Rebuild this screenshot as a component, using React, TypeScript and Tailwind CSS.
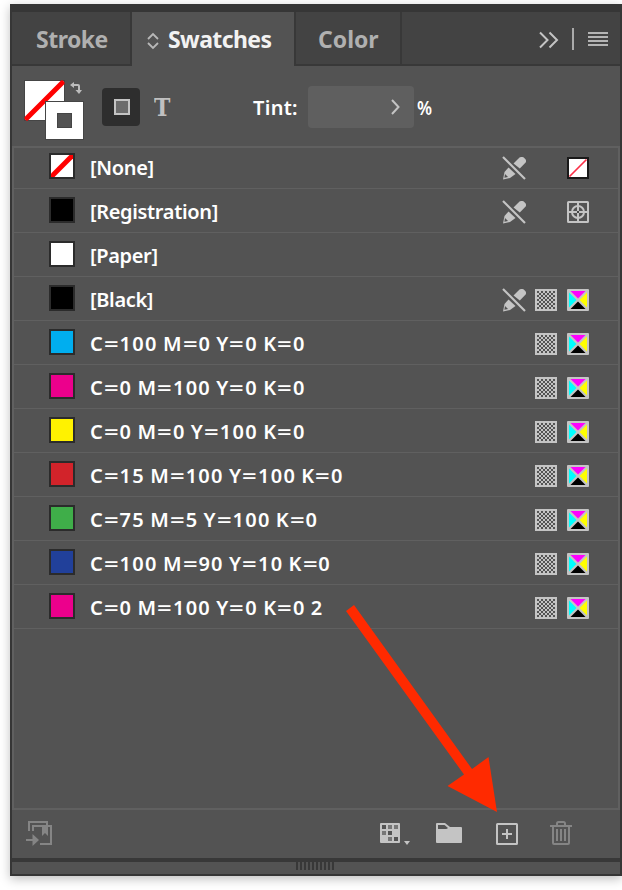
import React from "react";

type Swatch = {
  name: string;
  fill: string;
  locked?: boolean;
  kind?: "none" | "registration" | "process";
};

const swatches: Swatch[] = [
  { name: "[None]", fill: "none", locked: true, kind: "none" },
  { name: "[Registration]", fill: "#000000", locked: true, kind: "registration" },
  { name: "[Paper]", fill: "#ffffff" },
  { name: "[Black]", fill: "#000000", locked: true, kind: "process" },
  { name: "C=100 M=0 Y=0 K=0", fill: "#00aeef", kind: "process" },
  { name: "C=0 M=100 Y=0 K=0", fill: "#ec008c", kind: "process" },
  { name: "C=0 M=0 Y=100 K=0", fill: "#fff200", kind: "process" },
  { name: "C=15 M=100 Y=100 K=0", fill: "#d2232a", kind: "process" },
  { name: "C=75 M=5 Y=100 K=0", fill: "#3fae49", kind: "process" },
  { name: "C=100 M=90 Y=10 K=0", fill: "#21409a", kind: "process" },
  { name: "C=0 M=100 Y=0 K=0 2", fill: "#ec008c", kind: "process" },
];

function LockedIcon() {
  return (
    <svg width="24" height="24" viewBox="0 0 24 24" className="block">
      <g fill="#c4c4c4">
        <path d="M11.5 7.5 L17.5 1.6 Q18.2 1 19 1 H20.5 Q21.2 1 21.8 1.6 L23.4 3.2 Q24 3.8 24 4.5 V5.5 Q24 6.2 23.4 6.8 L17.8 12.5 Z" />
        <path d="M6.5 11.5 L13.5 18 L8 22 L1 23.5 L2.5 16 Z" />
      </g>
      <path d="M3 18 L6 21 L2.4 21.8 Z" fill="#535353" />
      <path d="M3 1.8 L23 21.8" stroke="#535353" strokeWidth="3" />
      <path d="M1 1 L23 23" stroke="#c4c4c4" strokeWidth="2.2" />
    </svg>
  );
}

function CheckerIcon() {
  const cells: React.ReactElement[] = [];
  for (let y = 0; y < 9; y++)
    for (let x = 0; x < 9; x++)
      if ((x + y) % 2 === 0)
        cells.push(<rect key={`${x}-${y}`} x={2 + x * 2} y={2 + y * 2} width="2" height="2" />);
  return (
    <svg width="22" height="22" className="block" shapeRendering="crispEdges">
      <rect width="22" height="22" rx="1" fill="#c4c4c4" />
      <g fill="#535353">{cells}</g>
    </svg>
  );
}

function ProcessIcon() {
  return (
    <svg width="22" height="22" className="block">
      <rect width="22" height="22" rx="1" fill="#c4c4c4" />
      <path d="M3.5 2 H18.5 L11 9.5 Z" fill="#ff00ff" />
      <path d="M20 3.5 V18.5 L12.5 11 Z" fill="#ffff00" />
      <path d="M2 3.5 V18.5 L9.5 11 Z" fill="#00ffff" />
      <path d="M3.5 20 H18.5 L11 12.5 Z" fill="#000" />
    </svg>
  );
}

function KindIcon({ kind }: { kind?: Swatch["kind"] }) {
  if (kind === "none")
    return (
      <svg width="22" height="22" className="block">
        <rect x="1" y="1" width="20" height="20" fill="#fff" stroke="#1a1a1a" strokeWidth="2" />
        <path d="M2.5 19.5 L19.5 2.5" stroke="#fb3048" strokeWidth="1.7" />
      </svg>
    );
  if (kind === "registration")
    return (
      <svg width="22" height="22" className="block" fill="none" stroke="#c4c4c4">
        <rect x="1" y="1" width="20" height="20" rx=".5" strokeWidth="2" />
        <circle cx="11" cy="11" r="6" strokeWidth="2" />
        <path d="M11 2 V20 M2 11 H20" strokeWidth="2" />
        <rect x="10" y="10" width="2" height="2" fill="#444" stroke="none" />
      </svg>
    );
  if (kind === "process") return <ProcessIcon />;
  return null;
}

/* Gives the equals signs and digits of a process colour name their wide set. */
function SwatchName({ name }: { name: string }) {
  if (!name.includes("=")) return <span className="tracking-[-0.35px]">{name}</span>;
  return (
    <>
      {name.split(/(=|\d+)/).map((part, i) => {
        if (part === "=")
          return (
            <span key={i} className="inline-block w-[16.8px] scale-x-[1.28] text-center">
              =
            </span>
          );
        if (/^\d+$/.test(part))
          return (
            <span key={i} className="tracking-[1.3px]">
              {part}
            </span>
          );
        return <span key={i}>{part}</span>;
      })}
    </>
  );
}

function SwatchRow({ swatch, first }: { swatch: Swatch; first: boolean }) {
  return (
    <div className={`flex items-end border-b border-[#606060] ${first ? "h-[41px]" : "h-11"}`}>
      <div className="flex h-10 w-full items-center">
        <div className="mb-1 ml-[35px] size-[26px] shrink-0 border-2 border-[#2b2b2b]">
          {swatch.fill === "none" ? (
            <svg width="22" height="22" className="block bg-white">
              <path d="M-1 23 L23 -1" stroke="#ff0000" strokeWidth="5" />
            </svg>
          ) : (
            <div className="size-full" style={{ backgroundColor: swatch.fill }} />
          )}
        </div>
        <span className="ml-[15px] flex-1 text-[20px] leading-none font-semibold whitespace-pre text-white">
          <SwatchName name={swatch.name} />
        </span>
        <div className="mr-[29px] flex items-center">
          {swatch.locked && (
            <div className={swatch.kind === "process" ? "mr-[9px]" : "mr-[41px]"}>
              <LockedIcon />
            </div>
          )}
          {swatch.kind === "process" && (
            <div className="mr-[10px]">
              <CheckerIcon />
            </div>
          )}
          <KindIcon kind={swatch.kind} />
        </div>
      </div>
    </div>
  );
}

function TabBar() {
  return (
    <div className="flex h-[54px] shrink-0 text-[23px] leading-none font-bold text-[#b0b0b0]">
      <div className="flex w-[120px] items-center border-r-2 border-b-2 border-[#383838] bg-[#434343] pt-[3px] pl-6 tracking-[-0.5px]">
        <span>Stroke</span>
      </div>
      <div className="flex w-[162px] items-center border-b-2 border-[#535353] bg-[#535353] pt-[3px] pl-[15px] tracking-[-0.6px] text-[#f2f2f2]">
        <svg width="12" height="18" className="mt-0.5 mr-[9px] block" fill="none" stroke="#b8b8b8" strokeWidth="1.8">
          <path d="M1 7 L6 2 L11 7 M1 11 L6 16 L11 11" />
        </svg>
        <span>Swatches</span>
      </div>
      <div className="flex w-[108px] items-center border-x-2 border-b-2 border-[#383838] bg-[#434343] pt-[3px] pl-[22px]">
        <span>Color</span>
      </div>
      <div className="flex flex-1 items-center justify-end border-b-2 border-[#383838] bg-[#434343] pt-0.5 pr-3">
        <svg width="20" height="18" className="mt-0.5 block" fill="none" stroke="#c4c4c4" strokeWidth="2">
          <path d="M1 1.5 L8.5 9 L1 16.5 M10.5 1.5 L18 9 L10.5 16.5" />
        </svg>
        <div className="ml-[13px] h-[22px] w-0.5 bg-[#aaaaaa]" />
        <div className="ml-[14px] flex w-5 flex-col gap-0.5">
          <div className="h-0.5 bg-[#b4b4b4]" />
          <div className="h-0.5 bg-[#b4b4b4]" />
          <div className="h-0.5 bg-[#b4b4b4]" />
          <div className="h-0.5 bg-[#b4b4b4]" />
        </div>
      </div>
    </div>
  );
}

function Controls() {
  return (
    <div className="flex h-20 shrink-0 items-center pt-0.5 pl-3 text-[20px] leading-none font-semibold text-white">
      <svg width="62" height="60" className="mt-[6px] block">
        <rect x="1" y="1" width="39" height="39" fill="#fff" />
        <rect x=".5" y=".5" width="40" height="40" fill="none" stroke="#454545" />
        <path d="M3 38 L38 3" stroke="#ff0000" strokeWidth="5" strokeLinecap="round" />
        <rect x="21.5" y="21.5" width="38" height="38" fill="#fff" stroke="#454545" />
        <rect x="33.5" y="33.5" width="14" height="14" fill="#535353" stroke="#454545" />
        <path d="M49 5 H54 Q55 5 55 6 V11" fill="none" stroke="#bcbcbc" strokeWidth="2" />
        <path d="M46 5 L50 2 V8 Z M51.5 10 H58 L55 14 Z" fill="#bcbcbc" />
      </svg>
      <div className="ml-4 flex size-[38px] items-center justify-center rounded bg-[#2e2e2e] pl-0.5">
        <div className="size-4 border-2 border-[#c4c4c4] bg-[#6c6c6c]" />
      </div>
      <span className="ml-[14px] w-5 font-['DejaVu_Serif'] text-[25px] font-bold text-[#c0c0c0]">
        <span className="inline-block origin-left scale-x-[0.88]">T</span>
      </span>
      <span className="ml-[79px] w-[55px] pt-0.5 tracking-[0.3px] whitespace-nowrap">Tint:</span>
      <div className="flex h-[42px] w-[106px] items-center justify-end rounded bg-[#5f5f5f] pr-[13px]">
        <svg width="10" height="16" className="block" fill="none" stroke="#c4c4c4" strokeWidth="2">
          <path d="M1 1 L7.5 8 L1 15" />
        </svg>
      </div>
      <span className="ml-[3px] origin-left scale-x-[0.86] pt-0.5">%</span>
    </div>
  );
}

function Footer() {
  return (
    <div className="flex h-12 shrink-0 items-center pl-[14px]">
      <svg width="28" height="28" className="block" fill="none" stroke="#858585" strokeWidth="2">
        <path d="M3 11 V2 H21 V5 M7 11 V6 H25 V24 H14" />
        <path d="M16 6 H22 V16 L19 13 L16 16 Z" fill="#858585" stroke="none" />
        <path d="M0 20 H9" />
        <path d="M6.5 14 L13 20 L6.5 26 Z" fill="#858585" stroke="none" />
      </svg>
      <svg width="32" height="24" className="ml-[326px] block">
        <rect y="1" width="20" height="20" rx="1" fill="#c4c4c4" />
        <g fill="#535353">
          <rect x="2" y="3" width="4" height="4" />
          <rect x="8" y="9" width="4" height="4" />
          <rect x="14" y="15" width="4" height="4" />
        </g>
        <g fill="#777">
          <rect x="8" y="3" width="4" height="4" />
          <rect x="14" y="3" width="4" height="4" />
          <rect x="2" y="9" width="4" height="4" />
          <rect x="8" y="15" width="4" height="4" />
        </g>
        <path d="M24 19 H30 L27 23 Z" fill="#c4c4c4" />
      </svg>
      <svg width="26" height="20" className="mb-0.5 ml-6 block">
        <path d="M0 1 Q0 0 1 0 H9 L14 4 H25 Q26 4 26 5 V19 Q26 20 25 20 H1 Q0 20 0 19 Z" fill="#c4c4c4" />
        <path d="M2 2 H8.5 L12 5 Q11 6 10 6 H2 Z" fill="#535353" />
      </svg>
      <svg width="22" height="22" className="ml-[34px] block" fill="none" stroke="#c4c4c4" strokeWidth="2">
        <rect x="1" y="1" width="20" height="20" rx=".5" />
        <path d="M11 6 V16 M6 11 H16" />
      </svg>
      <svg width="22" height="24" className="mb-0.5 ml-8 block" fill="none" stroke="#858585" strokeWidth="2">
        <path d="M0 5 H22 M3 5 V22 Q3 23 4 23 H18 Q19 23 19 22 V5 M7 4 V2.5 Q7 1 8.5 1 H13.5 Q15 1 15 2.5 V4 M7 8 V20 M11 8 V20 M15 8 V20" />
      </svg>
    </div>
  );
}

export default function App() {
  return (
    <div className="relative h-[890px] w-[622px] overflow-hidden bg-white pt-1 pl-[10px] font-['Noto_Sans','Open_Sans',sans-serif]">
      <div className="flex h-[872px] w-[612px] flex-col border-x-2 border-t-8 border-b-2 border-[#363636] bg-[#535353] shadow-[0_3px_10px_rgba(0,0,0,0.25)]">
        <TabBar />
        <Controls />
        <div className="h-[664px] shrink-0 border-2 border-[#606060]">
          {swatches.map((s, i) => (
            <SwatchRow key={i} swatch={s} first={i === 0} />
          ))}
        </div>
        <Footer />
        <div className="h-1 shrink-0 bg-[#383838]" />
        <div className="flex h-3 items-start justify-center">
          <svg width="40" height="8" className="block" stroke="#383838" strokeWidth="2">
            <path d="M1 0 V8 M5 0 V8 M9 0 V8 M13 0 V8 M17 0 V8 M21 0 V8 M25 0 V8 M29 0 V8 M33 0 V8 M37 0 V8" />
          </svg>
        </div>
      </div>
      <svg className="pointer-events-none absolute top-[600px] left-[340px]" width="170" height="220">
        <path d="M6 11 L14 5 L132 169 L148.5 157 L157 212 L107.5 186 L124 174.5 Z" fill="#ff2a00" />
      </svg>
    </div>
  );
}
